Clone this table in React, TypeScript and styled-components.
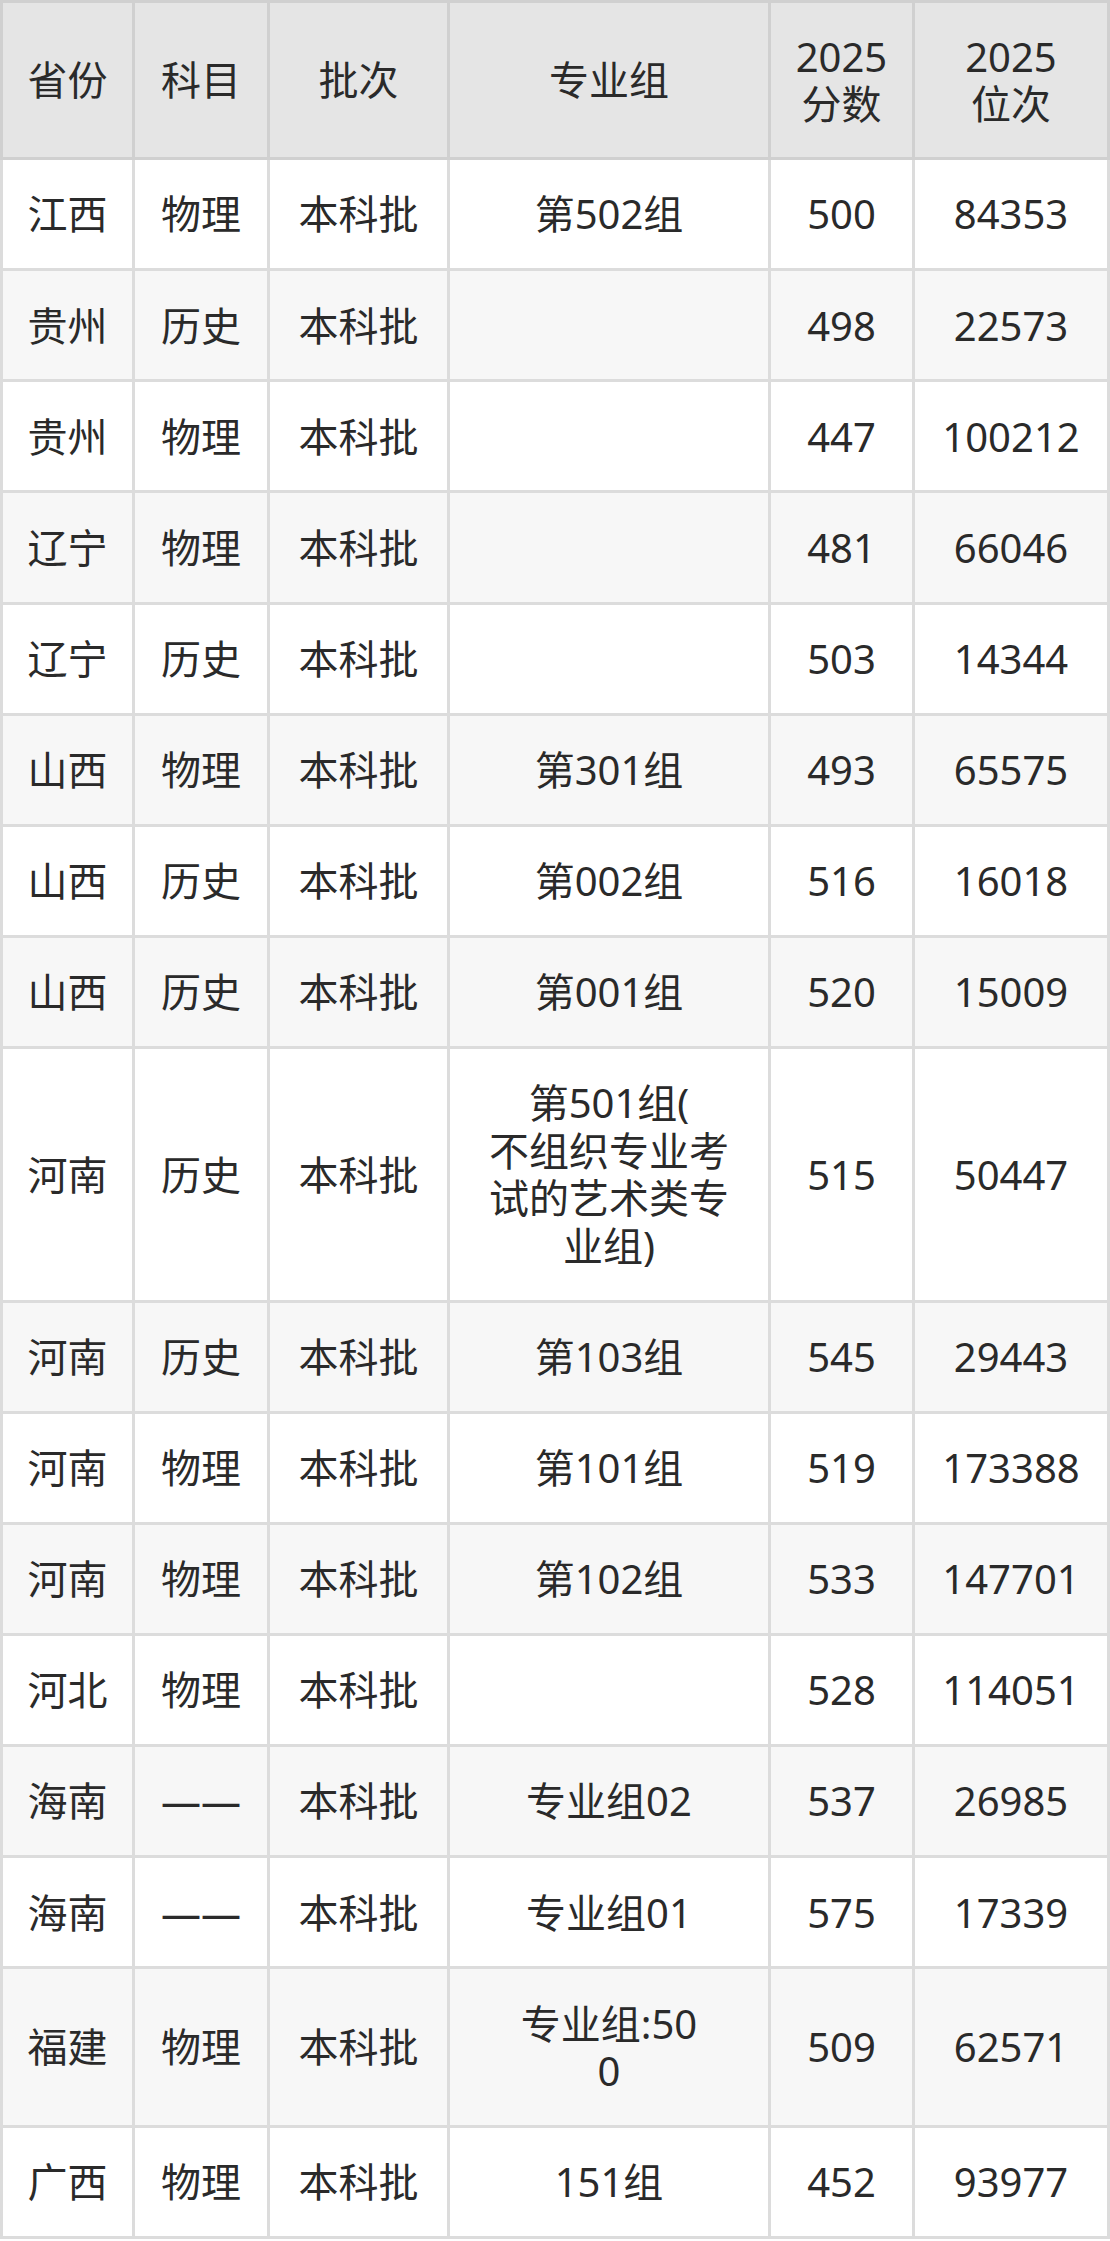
import React from 'react'
import styled, { createGlobalStyle } from 'styled-components'

const GlobalStyle = createGlobalStyle`
  html, body {
    margin: 0;
    padding: 0;
    background: #ffffff;
  }
  body {
    font-family: "Noto Sans", "Noto Sans CJK SC", sans-serif;
    color: #2a2a2a;
  }
`

const StyledTable = styled.table`
  width: 1110px;
  table-layout: fixed;
  border-collapse: collapse;
  border: 3px solid #d0d0d0;
  font-size: 40px;
  line-height: 47.6px;
`

const HeadCell = styled.th`
  background: #e5e5e5;
  border: 3px solid #d0d0d0;
  padding: 29.5px 8px;
  font-weight: 400;
  text-align: center;
  vertical-align: middle;
  color: #2a2a2a;
`

const Row = styled.tr<{ $striped: boolean }>`
  background: ${({ $striped }) => ($striped ? '#f7f7f7' : '#ffffff')};
`

const Cell = styled.td`
  border: 3px solid #dcdcdc;
  padding: 30.25px 8px;
  text-align: center;
  vertical-align: middle;
`

interface RowData {
  province: string
  subject: string
  batch: string
  group: string[]
  score: string
  rank: string
}

const rows: RowData[] = [
  { province: '江西', subject: '物理', batch: '本科批', group: ['第502组'], score: '500', rank: '84353' },
  { province: '贵州', subject: '历史', batch: '本科批', group: [], score: '498', rank: '22573' },
  { province: '贵州', subject: '物理', batch: '本科批', group: [], score: '447', rank: '100212' },
  { province: '辽宁', subject: '物理', batch: '本科批', group: [], score: '481', rank: '66046' },
  { province: '辽宁', subject: '历史', batch: '本科批', group: [], score: '503', rank: '14344' },
  { province: '山西', subject: '物理', batch: '本科批', group: ['第301组'], score: '493', rank: '65575' },
  { province: '山西', subject: '历史', batch: '本科批', group: ['第002组'], score: '516', rank: '16018' },
  { province: '山西', subject: '历史', batch: '本科批', group: ['第001组'], score: '520', rank: '15009' },
  {
    province: '河南',
    subject: '历史',
    batch: '本科批',
    group: ['第501组(', '不组织专业考', '试的艺术类专', '业组)'],
    score: '515',
    rank: '50447',
  },
  { province: '河南', subject: '历史', batch: '本科批', group: ['第103组'], score: '545', rank: '29443' },
  { province: '河南', subject: '物理', batch: '本科批', group: ['第101组'], score: '519', rank: '173388' },
  { province: '河南', subject: '物理', batch: '本科批', group: ['第102组'], score: '533', rank: '147701' },
  { province: '河北', subject: '物理', batch: '本科批', group: [], score: '528', rank: '114051' },
  { province: '海南', subject: '——', batch: '本科批', group: ['专业组02'], score: '537', rank: '26985' },
  { province: '海南', subject: '——', batch: '本科批', group: ['专业组01'], score: '575', rank: '17339' },
  { province: '福建', subject: '物理', batch: '本科批', group: ['专业组:50', '0'], score: '509', rank: '62571' },
  { province: '广西', subject: '物理', batch: '本科批', group: ['151组'], score: '452', rank: '93977' },
]

// column widths measured between grid-line centres
const widths = [132, 135, 180, 321, 144, 195]

const App = () => {
  return (
    <>
      <GlobalStyle />
      <StyledTable>
        <colgroup>
          {widths.map((w, i) => (
            <col key={i} style={{ width: w }} />
          ))}
        </colgroup>
        <thead>
          <tr>
            <HeadCell>省份</HeadCell>
            <HeadCell>科目</HeadCell>
            <HeadCell>批次</HeadCell>
            <HeadCell>专业组</HeadCell>
            <HeadCell>
              2025
              <br />
              分数
            </HeadCell>
            <HeadCell>
              2025
              <br />
              位次
            </HeadCell>
          </tr>
        </thead>
        <tbody>
          {rows.map((r, i) => (
            <Row key={i} $striped={i % 2 === 1}>
              <Cell>{r.province}</Cell>
              <Cell>{r.subject}</Cell>
              <Cell>{r.batch}</Cell>
              <Cell>
                {r.group.map((line, j) => (
                  <React.Fragment key={j}>
                    {j > 0 && <br />}
                    {line}
                  </React.Fragment>
                ))}
              </Cell>
              <Cell>{r.score}</Cell>
              <Cell>{r.rank}</Cell>
            </Row>
          ))}
        </tbody>
      </StyledTable>
    </>
  )
}

export default App
